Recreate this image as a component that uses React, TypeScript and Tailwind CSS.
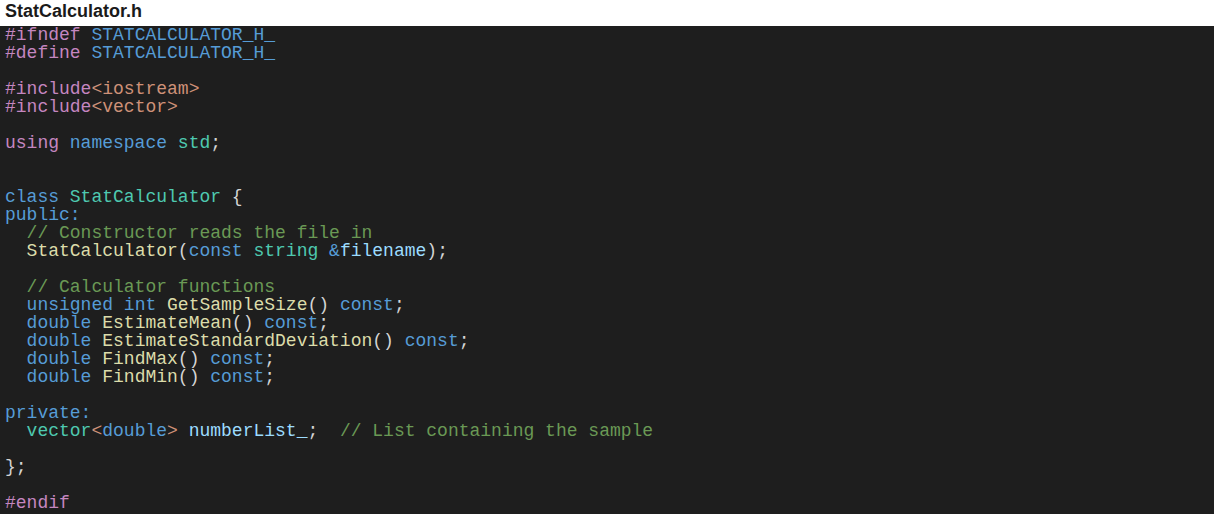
import React from 'react';

type Tok = [string, string];

const KW = 'text-[#569cd6]';
const PP = 'text-[#c586c0]';
const STR = 'text-[#ce9178]';
const TY = 'text-[#4ec9b0]';
const FN = 'text-[#dcdcaa]';
const CM = 'text-[#6a9955]';
const VAR = 'text-[#9cdcfe]';
const TX = 'text-[#d4d4d4]';

const lines: Tok[][] = [
  [[PP, '#ifndef '], [KW, 'STATCALCULATOR_H_']],
  [[PP, '#define '], [KW, 'STATCALCULATOR_H_']],
  [],
  [[PP, '#include'], [STR, '<iostream>']],
  [[PP, '#include'], [STR, '<vector>']],
  [],
  [[PP, 'using '], [KW, 'namespace '], [TY, 'std'], [TX, ';']],
  [],
  [],
  [[KW, 'class '], [TY, 'StatCalculator '], [TX, '{']],
  [[KW, 'public:']],
  [[CM, '  // Constructor reads the file in']],
  [[TX, '  '], [FN, 'StatCalculator'], [TX, '('], [KW, 'const '], [TY, 'string '], [KW, '&'], [VAR, 'filename'], [TX, ');']],
  [],
  [[CM, '  // Calculator functions']],
  [[TX, '  '], [KW, 'unsigned int '], [FN, 'GetSampleSize'], [TX, '() '], [KW, 'const'], [TX, ';']],
  [[TX, '  '], [KW, 'double '], [FN, 'EstimateMean'], [TX, '() '], [KW, 'const'], [TX, ';']],
  [[TX, '  '], [KW, 'double '], [FN, 'EstimateStandardDeviation'], [TX, '() '], [KW, 'const'], [TX, ';']],
  [[TX, '  '], [KW, 'double '], [FN, 'FindMax'], [TX, '() '], [KW, 'const'], [TX, ';']],
  [[TX, '  '], [KW, 'double '], [FN, 'FindMin'], [TX, '() '], [KW, 'const'], [TX, ';']],
  [],
  [[KW, 'private:']],
  [[TX, '  '], [TY, 'vector'], [STR, '<'], [KW, 'double'], [STR, '> '], [VAR, 'numberList_'], [TX, ';  '], [CM, '// List containing the sample']],
  [],
  [[TX, '};']],
  [],
  [[PP, '#endif']],
];

export default function App() {
  return (
    <div className="w-[1214px] h-[514px] overflow-hidden bg-white">
      <div className="h-[26px] px-[5px] font-['Liberation_Sans',Arial,sans-serif] font-bold text-[18px] leading-[22px] text-[#1a1a1a]">
        StatCalculator.h
      </div>
      <pre className="h-[488px] bg-[#1e1e1e] px-[5px] font-['Liberation_Mono','Courier_New',monospace] text-[18px] leading-[18px] whitespace-pre">
        {lines.map((line, i) => (
          <div key={i} className="h-[18px]">
            {line.map(([cls, text], j) => (
              <span key={j} className={cls}>{text}</span>
            ))}
          </div>
        ))}
      </pre>
    </div>
  );
}
